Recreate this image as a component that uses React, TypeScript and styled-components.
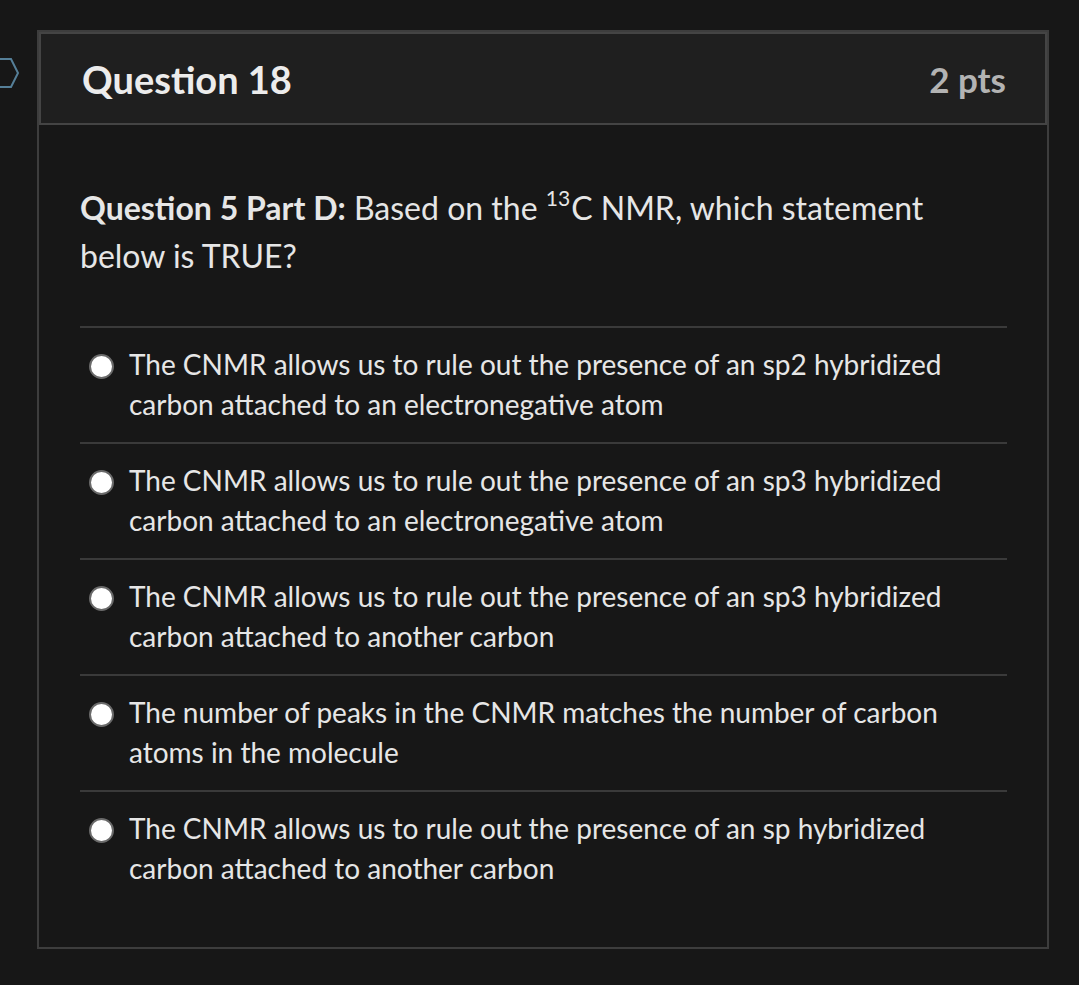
import styled, { createGlobalStyle } from 'styled-components'

const GlobalStyle = createGlobalStyle`
  html, body {
    margin: 0;
    padding: 0;
    background: #171717;
  }
  body {
    font-family: Lato, 'Open Sans', sans-serif;
    color: #e6e6e6;
  }
`

const answers = [
  'The CNMR allows us to rule out the presence of an sp2 hybridized carbon attached to an electronegative atom',
  'The CNMR allows us to rule out the presence of an sp3 hybridized carbon attached to an electronegative atom',
  'The CNMR allows us to rule out the presence of an sp3 hybridized carbon attached to another carbon',
  'The number of peaks in the CNMR matches the number of carbon atoms in the molecule',
  'The CNMR allows us to rule out the presence of an sp hybridized carbon attached to another carbon',
]

const Page = styled.div`
  position: relative;
  min-height: 985px;
  padding: 30px 0 0 37px;
  box-sizing: border-box;
`

const SideMarker = styled.svg`
  position: absolute;
  left: 0;
  top: 56px;
`

const Card = styled.section`
  width: 1012px;
  height: 919px;
  box-sizing: border-box;
  border: 2px solid #3d3d3d;
  background: #171717;
  display: flex;
  flex-direction: column;
`

const Header = styled.header`
  height: 93px;
  box-sizing: border-box;
  border: 2px solid #444444;
  background: #1f1f1f;
  display: flex;
  align-items: center;
  justify-content: space-between;
  padding: 0 39px 0 41px;
`

const Title = styled.h2`
  margin: 0;
  font-size: 38px;
  font-weight: 700;
  color: #ececec;
`

const Points = styled.span`
  font-size: 35px;
  font-weight: 700;
  color: #b3b3b3;
`

const Body = styled.div`
  padding: 59px 40px 40px 41px;
`

const Prompt = styled.p`
  margin: 0 0 46px;
  font-size: 32px;
  line-height: 48px;
  color: #e6e6e6;
`

const Sup = styled.sup`
  display: inline-block;
  font-size: 21px;
  line-height: 21px;
  vertical-align: 14px;
  margin-right: 1px;
`

const AnswerList = styled.ul`
  list-style: none;
  margin: 0;
  padding: 0;
`

const Answer = styled.li`
  display: flex;
  align-items: flex-start;
  border-top: 2px solid #3a3a3a;
  padding: 16px 0 18px;
`

const Radio = styled.span`
  flex: none;
  width: 25px;
  height: 25px;
  box-sizing: border-box;
  border-radius: 50%;
  background: #ffffff;
  border: 2px solid #6a6a6a;
  margin: 10px 15px 0 9px;
`

const AnswerText = styled.span`
  font-size: 28px;
  line-height: 40px;
  color: #e6e6e6;
`

export default function App() {
  return (
    <Page>
      <GlobalStyle />
      <SideMarker width="20" height="36" viewBox="0 0 20 36">
        <polygon
          points="-4,3 11,3 18,17 11,31 -4,31"
          fill="none"
          stroke="#557f98"
          strokeWidth="2"
        />
      </SideMarker>
      <Card>
        <Header>
          <Title>Question 18</Title>
          <Points>2 pts</Points>
        </Header>
        <Body>
          <Prompt>
            <strong>Question 5 Part D:</strong> Based on the <Sup>13</Sup>C NMR,
            which statement below is TRUE?
          </Prompt>
          <AnswerList>
            {answers.map(text => (
              <Answer key={text}>
                <Radio />
                <AnswerText>{text}</AnswerText>
              </Answer>
            ))}
          </AnswerList>
        </Body>
      </Card>
    </Page>
  )
}
